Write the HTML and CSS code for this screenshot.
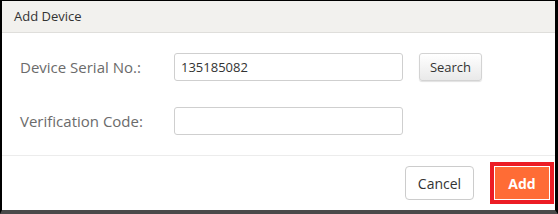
FILE: index.html
```html
<!DOCTYPE html>
<html lang="en">
    <head>
        <meta charset="UTF-8">
        <title>Add Device</title>
        <link rel="stylesheet" href="styles.css">
    </head>
    <body>
        <div class="dialog">
            <div class="dialog-head">Add Device</div>
            <div class="dialog-body">
                <div class="row">
                    <label class="label">Device Serial No.:</label>
                    <input class="field" type="text" value="135185082">
                    <button class="btn-search">Search</button>
                </div>
                <div class="row">
                    <label class="label">Verification Code:</label>
                    <input class="field" type="text" value="">
                </div>
            </div>
            <div class="dialog-foot">
                <button class="btn-cancel">Cancel</button>
                <button class="btn-add">Add</button>
            </div>
        </div>
    </body>
</html>
```

FILE: styles.css
```css
html, body{
    margin: 0;
    padding: 0;
    background-color: #000;
}

body{
    width: 558px;
    height: 214px;
    font-family: "Open Sans", "Noto Sans", sans-serif;
}

.dialog{
    box-sizing: border-box;
    height: 214px;
    background-color: #fff;
    border-top: 1px solid #000;
    border-left: 2px solid #000;
    border-right: 3px solid #000;
    border-bottom: 4px solid #4a4a4a;
}

.dialog-head{
    height: 31px;
    line-height: 31px;
    padding-left: 12px;
    background-color: #f2f1ee;
    border-bottom: 1px solid #dfdedb;
    font-size: 13px;
    color: #333;
}

.dialog-body{
    padding: 20px 0 20px 18px;
    border-bottom: 1px solid #ececec;
}

.row{
    display: flex;
    align-items: center;
    height: 28px;
}

.row + .row{
    margin-top: 26px;
}

.label{
    width: 154px;
    font-size: 15px;
    color: #6b6b6b;
}

.field{
    box-sizing: border-box;
    width: 229px;
    height: 28px;
    padding: 0 6px;
    border: 1px solid #cfcfcf;
    border-radius: 3px;
    font-family: inherit;
    font-size: 13px;
    color: #333;
    outline: none;
}

.btn-search{
    box-sizing: border-box;
    margin-left: 16px;
    width: 63px;
    height: 28px;
    padding: 0;
    border: 1px solid #d3d3d3;
    border-radius: 3px;
    background: linear-gradient(#ffffff, #e9e9e9);
    box-shadow: 0 1px 1px rgba(0,0,0,0.12);
    font-family: inherit;
    font-size: 13px;
    color: #333;
}

.dialog-foot{
    display: flex;
    justify-content: flex-end;
    align-items: center;
    height: 54px;
    padding-right: 6px;
}

.btn-cancel{
    box-sizing: border-box;
    width: 69px;
    height: 34px;
    padding: 0;
    border: 1px solid #ccc;
    border-radius: 4px;
    background-color: #fff;
    font-family: inherit;
    font-size: 14px;
    color: #333;
}

.btn-add{
    box-sizing: border-box;
    margin-left: 21px;
    width: 54px;
    height: 32px;
    padding: 0;
    border: none;
    background-color: #ff6c35;
    outline: 4px solid #ec1c24;
    outline-offset: 1px;
    font-family: inherit;
    font-size: 14px;
    font-weight: bold;
    color: #fff;
}
```
